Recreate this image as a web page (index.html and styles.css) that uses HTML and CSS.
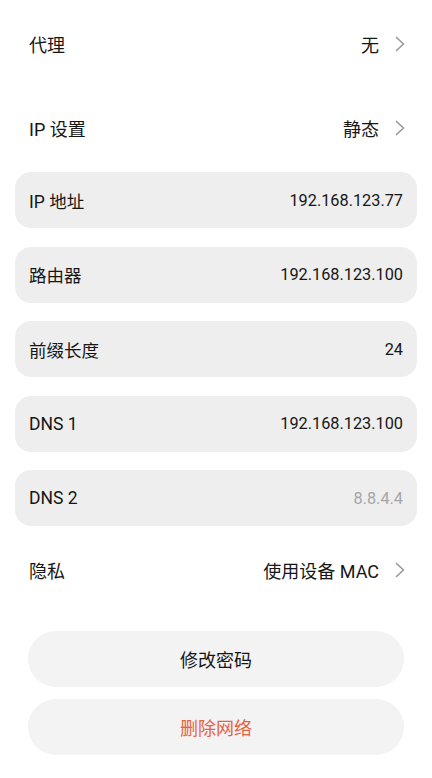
FILE: index.html
```html
<!DOCTYPE html>
<html lang="zh-CN">
<head>
<meta charset="utf-8">
<title>网络详情</title>
<link rel="stylesheet" href="styles.css">
</head>
<body>
<main class="page">
  <div class="row row-proxy">
    <span class="label">代理</span>
    <span class="value">无<svg class="chev" viewBox="0 0 10 16"><polyline points="1.5,1.5 8.5,8 1.5,14.5"/></svg></span>
  </div>

  <div class="row row-ip">
    <span class="label">IP 设置</span>
    <span class="value">静态<svg class="chev" viewBox="0 0 10 16"><polyline points="1.5,1.5 8.5,8 1.5,14.5"/></svg></span>
  </div>

  <div class="fields">
    <div class="field"><span class="label">IP 地址</span><span class="num">192.168.123.77</span></div>
    <div class="field"><span class="label">路由器</span><span class="num">192.168.123.100</span></div>
    <div class="field"><span class="label">前缀长度</span><span class="num">24</span></div>
    <div class="field"><span class="label">DNS 1</span><span class="num">192.168.123.100</span></div>
    <div class="field"><span class="label">DNS 2</span><span class="num hint">8.8.4.4</span></div>
  </div>

  <div class="row row-privacy">
    <span class="label">隐私</span>
    <span class="value">使用设备 MAC<svg class="chev" viewBox="0 0 10 16"><polyline points="1.5,1.5 8.5,8 1.5,14.5"/></svg></span>
  </div>

  <div class="actions">
    <button class="btn">修改密码</button>
    <button class="btn danger">删除网络</button>
  </div>
</main>
</body>
</html>
```

FILE: styles.css
```css
* { box-sizing: border-box; }

html, body {
  margin: 0;
  background: #ffffff;
}

body {
  font-family: Roboto, "Noto Sans CJK SC", "Noto Sans", sans-serif;
  color: #161616;
  font-size: 18px;
  width: 432px;
  height: 778px;
  overflow: hidden;
}

.page {
  padding-top: 16px;
  display: flex;
  flex-direction: column;
}

.row {
  height: 56px;
  padding: 0 27px 0 29px;
  display: flex;
  align-items: center;
  justify-content: space-between;
}

.row-ip { margin-top: 28px; }

.value {
  display: flex;
  align-items: center;
}

.chev {
  width: 10px;
  height: 16px;
  margin-left: 16px;
  fill: none;
  stroke: #9a9a9a;
  stroke-width: 1.7;
  stroke-linecap: round;
  stroke-linejoin: round;
}

.fields {
  margin: 16px 15px 0;
  display: flex;
  flex-direction: column;
  gap: 18.5px;
}

.field {
  height: 56px;
  border-radius: 16px;
  background: #eeeeee;
  padding: 0 14px;
  display: flex;
  align-items: center;
  justify-content: space-between;
}

.field .label { font-size: 17.5px; }

.num { font-size: 16.3px; }

.hint { color: #a6a6a6; }

.row-privacy { margin-top: 16px; }

.actions {
  margin: 33px 28px 0;
  display: flex;
  flex-direction: column;
  gap: 12px;
}

.btn {
  height: 56px;
  border: none;
  border-radius: 28px;
  background: #f3f3f3;
  font-family: inherit;
  font-size: 18px;
  color: #161616;
}

.btn.danger { color: #e8623f; }
```
